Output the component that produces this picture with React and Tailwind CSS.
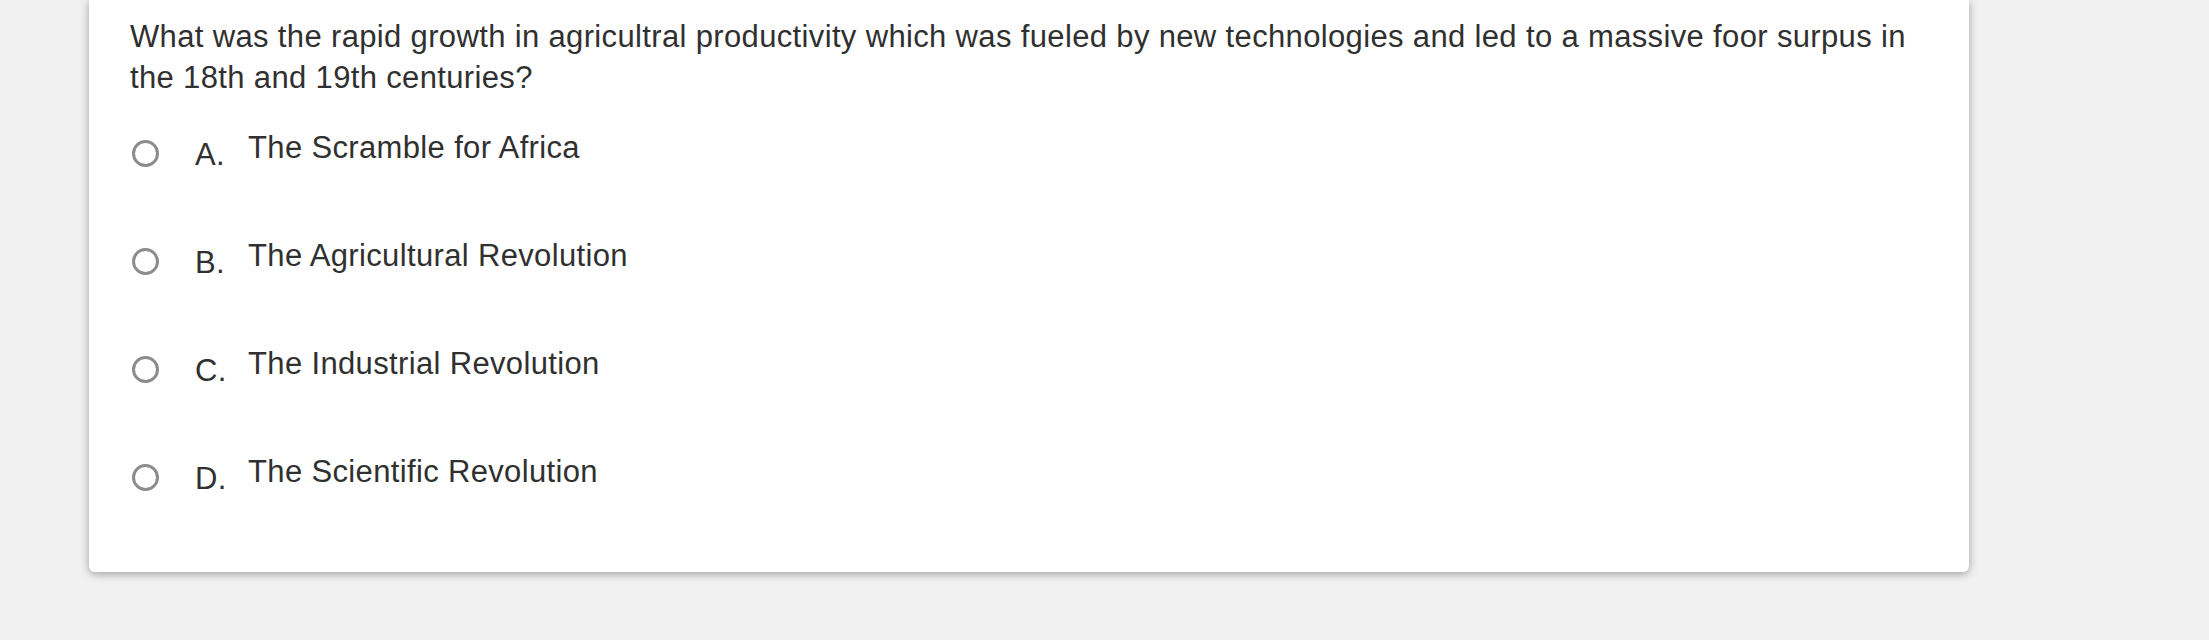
const question =
  'What was the rapid growth in agricultral productivity which was fueled by new technologies and led to a massive foor surpus in the 18th and 19th centuries?';

const options = [
  { letter: 'A.', text: 'The Scramble for Africa' },
  { letter: 'B.', text: 'The Agricultural Revolution' },
  { letter: 'C.', text: 'The Industrial Revolution' },
  { letter: 'D.', text: 'The Scientific Revolution' },
];

export default function App() {
  return (
    <div className="h-[640px] w-full overflow-hidden bg-[#f1f1f1] font-['Liberation_Sans',Arial,sans-serif] text-[#303030] tracking-[0.35px]">
      <div className="ml-[89px] w-[1880px] rounded-b-[6px] bg-white pt-[17px] pr-[40px] pb-[80px] pl-[41px] shadow-[0_2px_8px_rgba(0,0,0,0.35)]">
        {/* Question */}
        <p className="text-[31px] leading-[40.5px]">{question}</p>

        {/* Choices */}
        <div className="mt-[30px] flex flex-col gap-[68px]">
          {options.map((opt) => (
            <label key={opt.letter} className="flex h-[40px] items-start text-[31px] leading-[40px]">
              <span className="ml-[2px] mt-[12px] h-[27px] w-[27px] shrink-0 rounded-full border-[3px] border-[#8c8c8c] bg-white" />
              <span className="ml-[36px] mt-[7px] w-[53px] shrink-0">{opt.letter}</span>
              <span>{opt.text}</span>
            </label>
          ))}
        </div>
      </div>
    </div>
  );
}
